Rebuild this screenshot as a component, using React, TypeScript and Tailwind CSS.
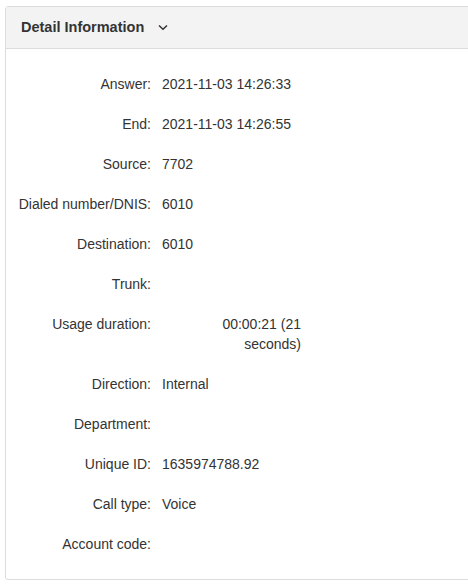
import React from "react";

const rows: { label: string; value: string; right?: boolean }[] = [
  { label: "Answer:", value: "2021-11-03 14:26:33" },
  { label: "End:", value: "2021-11-03 14:26:55" },
  { label: "Source:", value: "7702" },
  { label: "Dialed number/DNIS:", value: "6010" },
  { label: "Destination:", value: "6010" },
  { label: "Trunk:", value: "" },
  { label: "Usage duration:", value: "00:00:21 (21 seconds)", right: true },
  { label: "Direction:", value: "Internal" },
  { label: "Department:", value: "" },
  { label: "Unique ID:", value: "1635974788.92" },
  { label: "Call type:", value: "Voice" },
  { label: "Account code:", value: "" },
];

export default function App() {
  return (
    <div className="w-[468px] h-[585px] bg-white overflow-hidden" style={{ fontFamily: '"Liberation Sans", Arial, sans-serif' }}>
      <div className="mt-[6px] ml-[5px] w-[480px] border border-[#dcdcdc] rounded-[3px] bg-white">
        <div className="h-[42px] bg-[#f3f3f3] border-b border-[#dcdcdc] flex items-center pl-[15px]">
          <span className="text-[14.5px] font-bold text-[#333]">Detail Information</span>
          <svg className="ml-[14px]" width="10" height="7" viewBox="0 0 10 7">
            <path d="M1 1.5 L5 5.2 L9 1.5" fill="none" stroke="#333" strokeWidth="1.5" />
          </svg>
        </div>
        <div className="pt-[15px] pb-[15px] text-[14px] text-[#333] leading-[20px]">
          {rows.map((r) => (
            <div key={r.label} className="flex py-[10px]">
              <div className="w-[145px] text-right whitespace-nowrap">{r.label}</div>
              <div className={"ml-[11px] w-[139px] " + (r.right ? "text-right" : "text-left whitespace-nowrap")}>
                {r.value}
              </div>
            </div>
          ))}
        </div>
      </div>
    </div>
  );
}
